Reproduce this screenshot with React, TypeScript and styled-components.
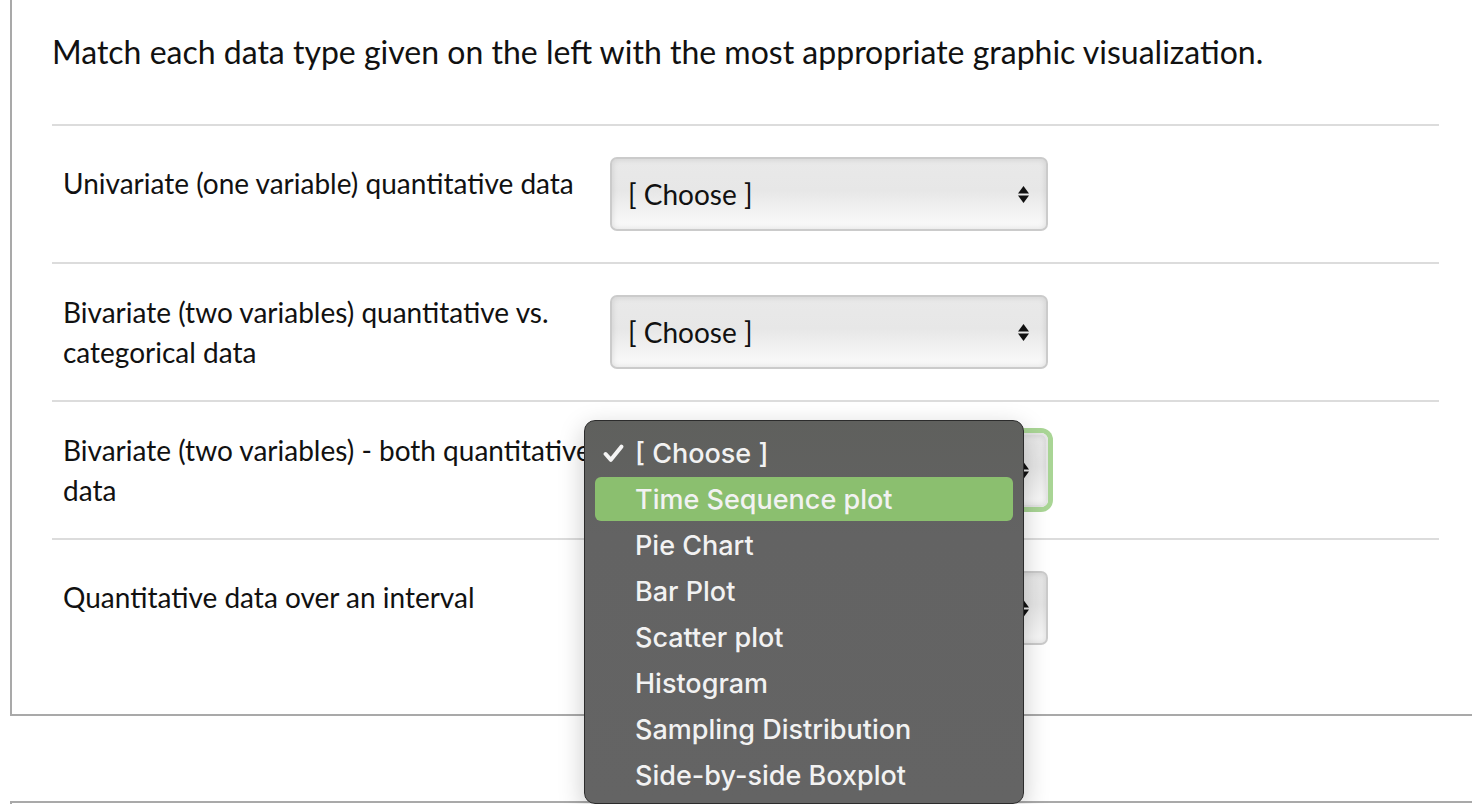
import styled, { createGlobalStyle } from 'styled-components';

type Pair = {
  id: string;
  label: string;
  open?: boolean;
};

const pairs: Pair[] = [
  { id: 'uni', label: 'Univariate (one variable) quantitative data' },
  { id: 'bi-cat', label: 'Bivariate (two variables) quantitative vs. categorical data' },
  { id: 'bi-quant', label: 'Bivariate (two variables) - both quantitative data', open: true },
  { id: 'interval', label: 'Quantitative data over an interval' },
];

const options = [
  '[ Choose ]',
  'Time Sequence plot',
  'Pie Chart',
  'Bar Plot',
  'Scatter plot',
  'Histogram',
  'Sampling Distribution',
  'Side-by-side Boxplot',
];

const GlobalStyle = createGlobalStyle`
  html, body {
    margin: 0;
    padding: 0;
    background: #fff;
    overflow: hidden;
  }
  body {
    font-family: Lato, 'Liberation Sans', sans-serif;
    color: #111;
  }
`;

function Arrows() {
  return (
    <svg width="13" height="19" viewBox="0 0 13 19">
      <path d="M6.5 1 L12 8.5 L1 8.5 Z" fill="#111" />
      <path d="M1 10.5 L12 10.5 L6.5 18 Z" fill="#111" />
    </svg>
  );
}

function Check() {
  return (
    <svg width="21" height="21" viewBox="0 0 20 20">
      <path
        d="M2.5 10.5 L7.5 16 L17.5 3.5"
        fill="none"
        stroke="#f4f4f4"
        strokeWidth="3.8"
        strokeLinecap="round"
        strokeLinejoin="round"
      />
    </svg>
  );
}

function OptionsMenu() {
  return (
    <Menu>
      {options.map((option, i) => (
        <MenuItem key={option} active={i === 1}>
          {i === 0 && (
            <CheckMark>
              <Check />
            </CheckMark>
          )}
          {option}
        </MenuItem>
      ))}
    </Menu>
  );
}

export default function App() {
  return (
    <Page>
      <GlobalStyle />
      <Card>
        <Title>Match each data type given on the left with the most appropriate graphic visualization.</Title>
        {pairs.map(pair => (
          <Row key={pair.id}>
            <Label>{pair.label}</Label>
            <SelectWrap>
              <SelectBox focused={pair.open}>
                <span>[ Choose ]</span>
                <Arrows />
              </SelectBox>
              {pair.open && <OptionsMenu />}
            </SelectWrap>
          </Row>
        ))}
      </Card>
      <NextCard />
    </Page>
  );
}

const Page = styled.div`
  height: 804px;
  overflow: hidden;
`;

const Card = styled.div`
  margin: -2px -40px 0 10px;
  border: 2px solid #a9a9a9;
  padding: 31px 71px 38px 40px;
`;

const Title = styled.h1`
  margin: 0 0 51px;
  font-size: 32px;
  line-height: 42px;
  font-weight: 400;
  color: #111;
`;

const Row = styled.div`
  display: grid;
  grid-template-columns: 558px 438px;
  align-items: center;
  height: 136px;
  border-top: 2px solid #dcdcdc;
`;

const Label = styled.div`
  min-height: 62px;
  padding: 0 0 0 11px;
  font-size: 28px;
  line-height: 40px;
  color: #111;
`;

const SelectWrap = styled.div`
  position: relative;
`;

const SelectBox = styled.div<{ focused?: boolean }>`
  box-sizing: border-box;
  height: 74px;
  display: flex;
  align-items: center;
  justify-content: space-between;
  padding: 0 16px 0 16px;
  border: 2px solid ${p => (p.focused ? '#e4e4e4' : '#cbcbcb')};
  border-radius: 7px;
  background: linear-gradient(#e9e9e9 0%, #e7e7e7 45%, #fbfbfb 100%);
  box-shadow: ${p =>
    p.focused
      ? '0 0 0 5px #a9d595, inset 0 0 6px rgba(0, 0, 0, 0.12)'
      : 'inset 0 0 6px rgba(0, 0, 0, 0.12)'};
  font-size: 28px;
  color: #111;
`;

const Menu = styled.div`
  position: absolute;
  left: -26px;
  top: -13px;
  width: 440px;
  box-sizing: border-box;
  padding: 10px 0 6px;
  border: 1px solid #2c2c2c;
  border-radius: 11px;
  background: linear-gradient(#5f605d, #636363 30%, #646464);
  box-shadow: 0 8px 26px rgba(0, 0, 0, 0.22);
  display: flex;
  flex-direction: column;
  gap: 2px;
  z-index: 2;
`;

const MenuItem = styled.div<{ active?: boolean }>`
  position: relative;
  height: 44px;
  margin: 0 10px;
  padding-left: 40px;
  display: flex;
  align-items: center;
  border-radius: 6px;
  background: ${p => (p.active ? '#8bbf6f' : 'transparent')};
  font-family: Inter, 'Liberation Sans', sans-serif;
  font-size: 27px;
  font-weight: 500;
  color: #f2f2f2;
`;

const CheckMark = styled.span`
  position: absolute;
  left: 8px;
  top: 12px;
  display: flex;
`;

const NextCard = styled.div`
  margin: 85px -40px 0 10px;
  height: 40px;
  border-top: 2px solid #a9a9a9;
  border-left: 2px solid #a9a9a9;
`;
